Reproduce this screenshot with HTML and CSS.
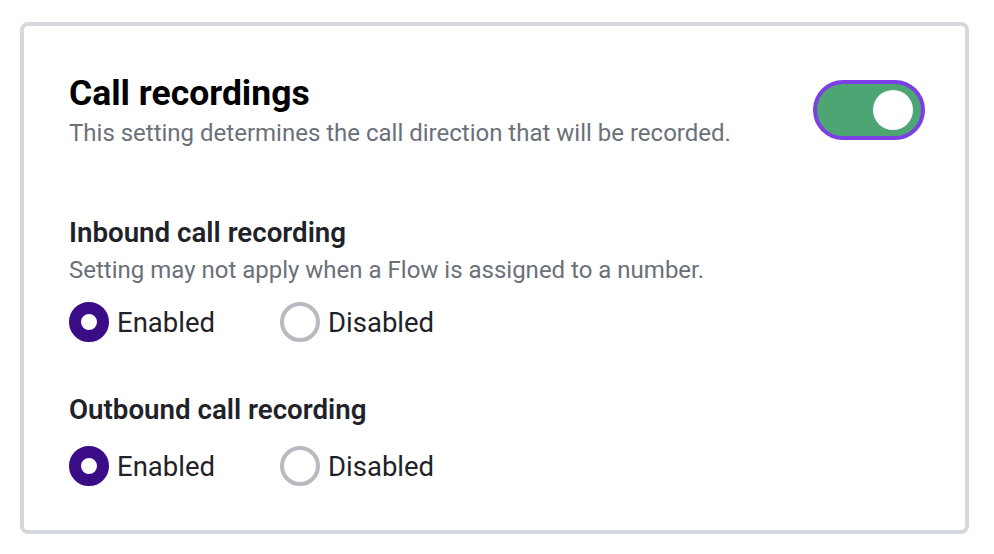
FILE: index.html
```html
<!DOCTYPE html>
<html lang="en">
<head>
  <meta charset="UTF-8" />
  <title>Call recordings</title>
  <link rel="stylesheet" href="styles.css">
</head>
<body>

  <div class="card">
    <div class="card-head">
      <div>
        <h1>Call recordings</h1>
        <p class="hint">This setting determines the call direction that will be recorded.</p>
      </div>
      <button class="switch on" aria-label="Toggle call recordings"><span class="knob"></span></button>
    </div>

    <div class="group">
      <h2>Inbound call recording</h2>
      <p class="hint">Setting may not apply when a Flow is assigned to a number.</p>
      <div class="radios">
        <label class="radio"><span class="dot checked"></span>Enabled</label>
        <label class="radio"><span class="dot"></span>Disabled</label>
      </div>
    </div>

    <div class="group">
      <h2>Outbound call recording</h2>
      <div class="radios">
        <label class="radio"><span class="dot checked"></span>Enabled</label>
        <label class="radio"><span class="dot"></span>Disabled</label>
      </div>
    </div>
  </div>

</body>
</html>
```

FILE: styles.css
```css
* {
  box-sizing: border-box;
  margin: 0;
  padding: 0;
}

body {
  font-family: Roboto, 'Liberation Sans', sans-serif;
  background: #fff;
  color: #1f2329;
  padding: 22px 25px 0 20px;
}

.card {
  width: 949px;
  height: 512px;
  border: 4px solid #d5d8dc;
  border-radius: 8px;
  padding: 47px 40px 0 45px;
}

.card-head {
  display: flex;
  justify-content: space-between;
  align-items: flex-start;
}

h1 {
  font-size: 35.5px;
  font-weight: 700;
  color: #000;
  line-height: 40px;
}

.hint {
  font-size: 24px;
  color: #6b7079;
  line-height: 28px;
  margin-top: 5px;
}

.card-head .hint {
  margin-top: 6px;
}

.switch {
  width: 112px;
  height: 60px;
  border: 4px solid #7b3fe4;
  border-radius: 30px;
  background: #4ea574;
  display: flex;
  align-items: center;
  justify-content: flex-end;
  padding-right: 8px;
  margin-top: 7px;
  cursor: pointer;
}

.knob {
  width: 40px;
  height: 40px;
  border-radius: 50%;
  background: #fff;
}

.group {
  margin-top: 68px;
}

.group + .group {
  margin-top: 50px;
}

h2 {
  font-size: 27.7px;
  font-weight: 600;
  line-height: 36px;
  color: #1f2329;
}

.radios {
  display: flex;
  gap: 65px;
  margin-top: 18px;
}

.radio {
  display: flex;
  align-items: center;
  gap: 8px;
  font-size: 27.5px;
  color: #1f2329;
}

.dot {
  width: 40px;
  height: 40px;
  border-radius: 50%;
  border: 4px solid #b8babf;
}

.dot.checked {
  border: 12px solid #3a0d86;
}
```
